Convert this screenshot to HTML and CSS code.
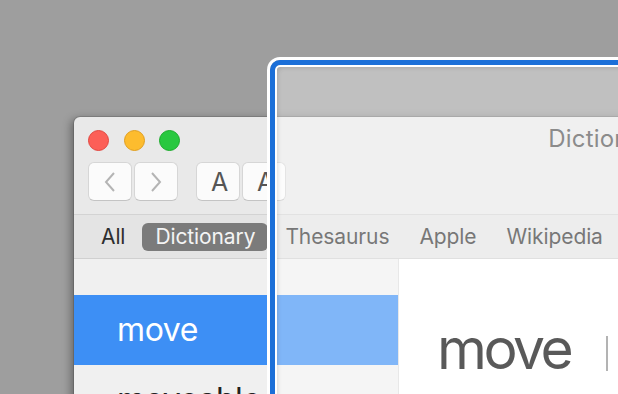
FILE: index.html
```html
<!DOCTYPE html>
<html>
<head>
<meta charset="utf-8">
<link rel="stylesheet" href="styles.css">
</head>
<body>
<div class="desktop">
  <div class="window">
    <div class="toolbar">
      <div class="titlerow">
        <div class="lights">
          <span class="light red"></span>
          <span class="light yellow"></span>
          <span class="light green"></span>
        </div>
        <div class="title">Dictionary</div>
        <div></div>
      </div>
      <div class="tools">
        <div class="seg">
          <div class="btn"><svg width="14" height="22" viewBox="0 0 14 22"><polyline points="11,2 3,11 11,20" fill="none" stroke="#b4b4b4" stroke-width="2"/></svg></div>
          <div class="btn"><svg width="14" height="22" viewBox="0 0 14 22"><polyline points="3,2 11,11 3,20" fill="none" stroke="#b4b4b4" stroke-width="2"/></svg></div>
        </div>
        <div class="seg">
          <div class="btn font">A</div>
          <div class="btn font">A</div>
        </div>
      </div>
    </div>
    <div class="tabs">
      <span class="tab">All</span>
      <span class="tab active">Dictionary</span>
      <span class="tab">Thesaurus</span>
      <span class="tab">Apple</span>
      <span class="tab">Wikipedia</span>
    </div>
    <div class="content">
      <div class="sidebar">
        <div class="row first"></div>
        <div class="row selected">move</div>
        <div class="row next">moveable</div>
      </div>
      <div class="main">
        <div class="headword"><span class="word">move</span><span class="bar"></span></div>
      </div>
    </div>
  </div>
  <div class="overlay"></div>
</div>
</body>
</html>
```

FILE: styles.css
```css
html, body {
  margin: 0;
  padding: 0;
}
body {
  width: 618px;
  height: 394px;
  overflow: hidden;
  background: #9e9e9e;
  font-family: Inter, Roboto, "Liberation Sans", sans-serif;
}
.desktop {
  position: relative;
  width: 618px;
  height: 394px;
  overflow: hidden;
}
.window {
  position: absolute;
  left: 74px;
  top: 117px;
  width: 1066px;
  height: 420px;
  background: #e9e9e9;
  border-radius: 6px 6px 0 0;
  box-shadow: 0 0 0 1px rgba(0,0,0,0.12), -3px 2px 8px rgba(0,0,0,0.35);
  overflow: hidden;
  display: flex;
  flex-direction: column;
}
.toolbar {
  height: 98px;
  box-sizing: border-box;
  padding: 10px 14px 0 14px;
  border-bottom: 1px solid #d3d3d3;
  display: flex;
  flex-direction: column;
  gap: 14px;
}
.titlerow {
  display: grid;
  grid-template-columns: 1fr auto 1fr;
  align-items: center;
  height: 21px;
}
.lights {
  display: flex;
  gap: 14.5px;
}
.light {
  width: 21px;
  height: 21px;
  border-radius: 50%;
  box-sizing: border-box;
}
.red { background: #fc5f57; border: 1px solid #e2463f; }
.yellow { background: #fdbc2e; border: 1px solid #e09e1e; }
.green { background: #28c83f; border: 1px solid #1aab2a; }
.title {
  font-size: 24px;
  color: #4d4d4d;
  letter-spacing: 0.2px;
  margin-top: -3px;
}
.tools {
  display: flex;
  gap: 18px;
}
.seg {
  display: flex;
  gap: 2px;
}
.btn {
  width: 44px;
  height: 39px;
  box-sizing: border-box;
  background: #fbfbfb;
  border: 1px solid #d6d6d6;
  border-bottom-color: #c4c4c4;
  border-radius: 6px;
  display: flex;
  align-items: center;
  justify-content: center;
}
.font {
  font-size: 25px;
  color: #555;
  padding-left: 3px;
}
.tabs {
  height: 44px;
  box-sizing: border-box;
  background: #e4e4e4;
  border-bottom: 1px solid #d0d0d0;
  display: flex;
  align-items: center;
  gap: 4px;
  padding-left: 14px;
}
.tab {
  font-size: 21px;
  color: #2e2e2e;
  padding: 0 13px;
  height: 28px;
  line-height: 28px;
  border-radius: 6px;
  letter-spacing: -0.1px;
}
.tab.active {
  background: #7b7b7b;
  color: #f4f4f4;
}
.content {
  flex: 1;
  display: flex;
}
.sidebar {
  width: 324px;
  background: #f0f0f0;
  border-right: 1px solid #dcdcdc;
}
.row {
  height: 70px;
  line-height: 70px;
  padding-left: 43px;
  font-size: 32px;
  letter-spacing: -0.4px;
  color: #222;
}
.row.first {
  height: 36px;
}
.row.selected {
  background: #3d8ff5;
  color: #fff;
}
.row.next {
  line-height: 70px;
}
.main {
  flex: 1;
  background: #fff;
  padding: 54px 0 0 38px;
}
.headword {
  display: flex;
  align-items: center;
  height: 70px;
}
.word {
  font-size: 57px;
  color: #000;
  letter-spacing: -3.5px;
}
.bar {
  width: 2px;
  height: 35px;
  background: #8a8a8a;
  margin-left: 36px;
  margin-top: 10px;
}
.overlay {
  position: absolute;
  left: 270px;
  top: 60px;
  right: -30px;
  bottom: -30px;
  border: 5px solid #1b6fd8;
  border-radius: 10px;
  background: rgba(255,255,255,0.35);
  box-shadow: 0 0 0 3px #fff, inset 0 0 0 2px #fff, inset 3px 3px 4px rgba(0,0,0,0.12);
}
```
